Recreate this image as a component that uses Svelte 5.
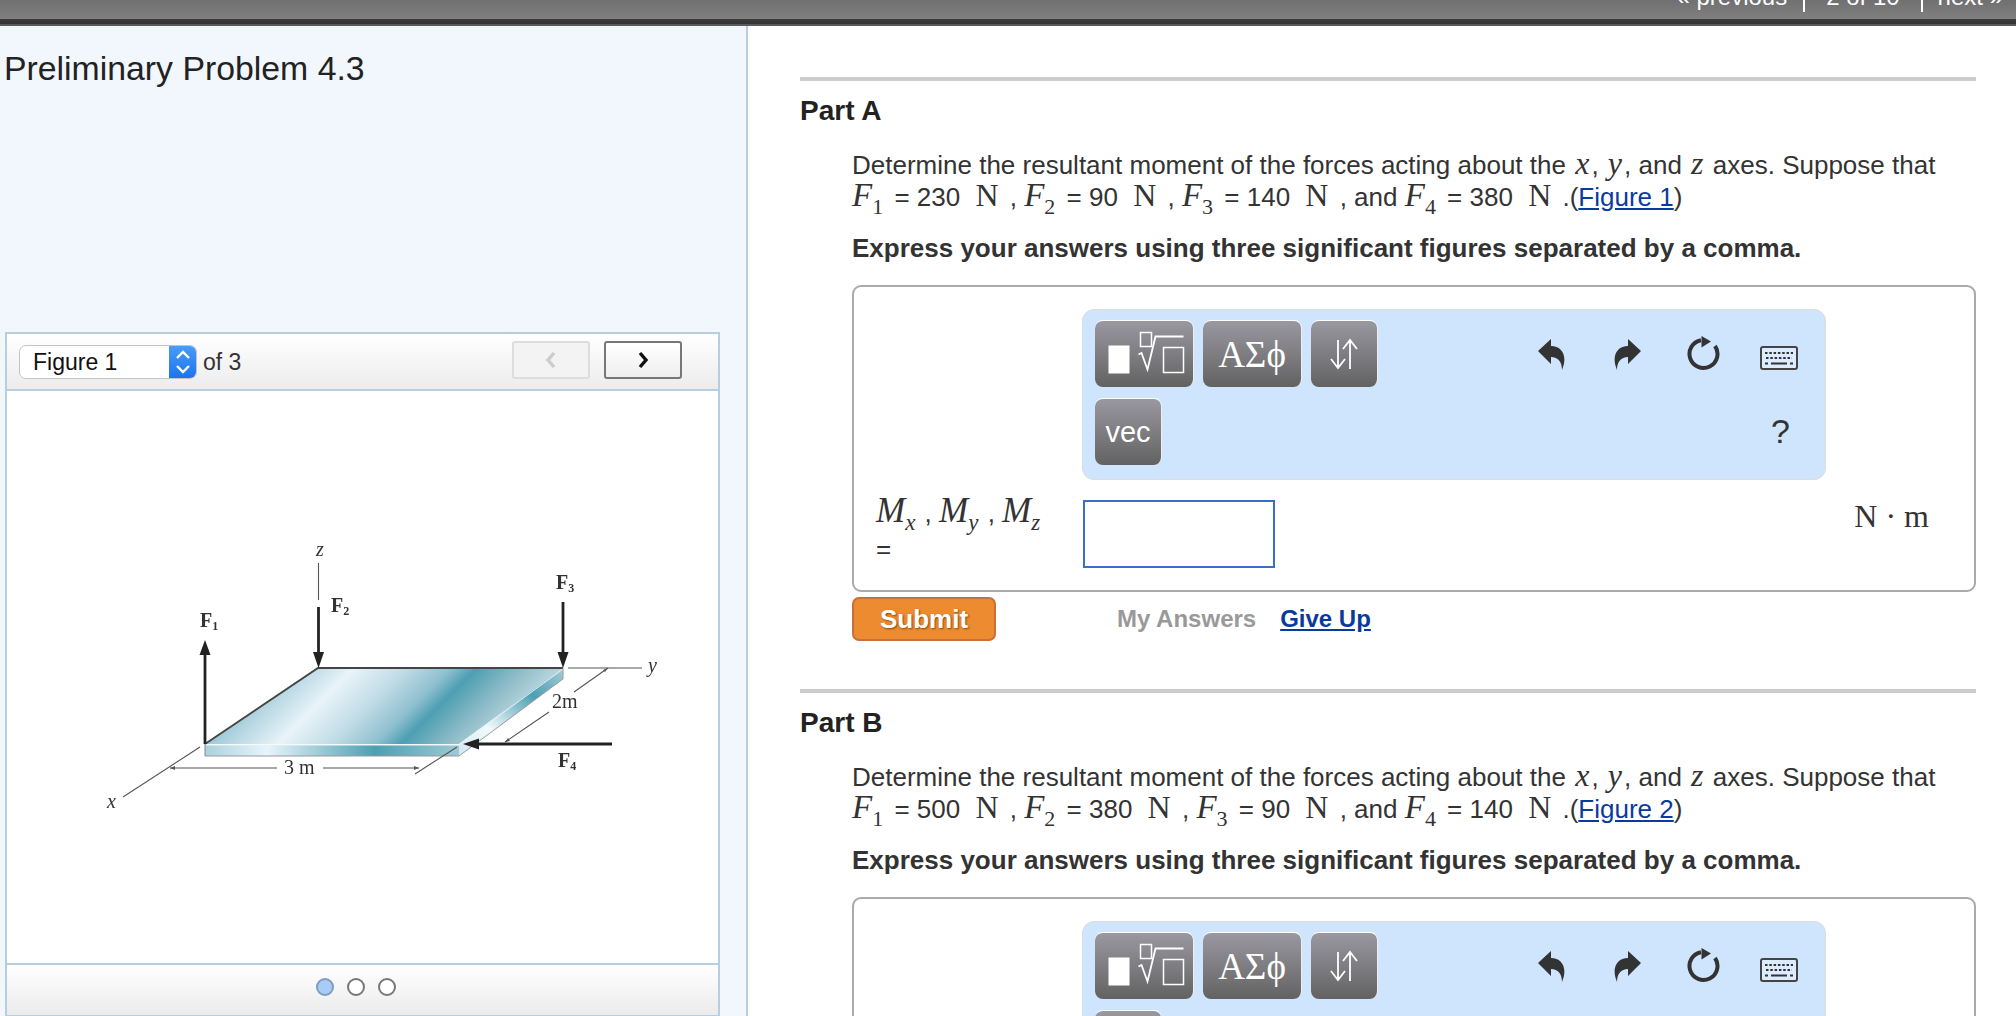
<script>
  const parts = [
    { name: 'Part A', f: [230, 90, 140, 380], fig: 'Figure 1', actions: true },
    { name: 'Part B', f: [500, 380, 90, 140], fig: 'Figure 2', actions: false }
  ];
</script>

<div class="page">
  <header class="bar">
    <nav>
      <span class="prev">« previous</span>
      <span class="count">2 of 10</span>
      <span class="next">next »</span>
    </nav>
  </header>
  <div class="cols">
    <aside>
      <h1>Preliminary Problem 4.3</h1>
      <section class="figure">
        <div class="figbar">
          <div class="select"><span>Figure 1</span><i>
            <svg viewBox="0 0 28 34" width="28" height="34"><path d="M8 13l6-6 6 6M8 21l6 6 6-6" fill="none" stroke="#fff" stroke-width="2.4"/></svg>
          </i></div>
          <span class="of">of 3</span>
          <button class="pg off" aria-label="previous"><svg viewBox="0 0 14 18" width="14" height="18"><path d="M10 2L4 9l6 7" fill="none" stroke="#ccc" stroke-width="3.4"/></svg></button>
          <button class="pg" aria-label="next"><svg viewBox="0 0 14 18" width="14" height="18"><path d="M4 2l6 7-6 7" fill="none" stroke="#111" stroke-width="3.4"/></svg></button>
        </div>
        <div class="figbody">
          <svg class="diagram" viewBox="0 0 600 320" width="600" height="320">
            <defs>
              <linearGradient id="top" gradientUnits="userSpaceOnUse" x1="174.500" y1="174.500" x2="315.500" y2="315.500">
                <stop offset="0" stop-color="#9cc8d6"/><stop offset=".26" stop-color="#e8f4fa"/><stop offset=".45" stop-color="#c0dbe4"/>
                <stop offset=".6" stop-color="#8fc0cf"/><stop offset=".695" stop-color="#4d9fb3"/><stop offset=".86" stop-color="#8fbcc8"/><stop offset="1" stop-color="#b8d6df"/>
              </linearGradient>
              <linearGradient id="front">
                <stop offset="0" stop-color="#a9d2de"/><stop offset=".245" stop-color="#e8f4fa"/><stop offset=".67" stop-color="#4d9fb3"/><stop offset="1" stop-color="#9ccad6"/>
              </linearGradient>
              <linearGradient id="side" x1="0" y1="1" x2="1" y2="0">
                <stop offset="0" stop-color="#cfe8f0"/><stop offset=".3" stop-color="#f2fafd"/><stop offset=".7" stop-color="#4d9fb3"/><stop offset="1" stop-color="#a6cdd8"/>
              </linearGradient>
              <filter id="soft" x="-5%" y="-5%" width="110%" height="110%"><feGaussianBlur stdDeviation="0.6"/></filter>
            </defs>
            <g filter="url(#soft)">
              <path d="M238 148H483L379 224H125Z" fill="url(#top)"/>
              <path d="M125 225H379V236H125Z" fill="url(#front)"/>
              <path d="M379 224L483 148V159L379 236Z" fill="url(#side)"/>
              <path d="M125 225H379L483 149" fill="none" stroke="#e8f3f7" stroke-width="1"/>
              <path d="M125 224L238 148H483" fill="none" stroke="#444" stroke-width="1.8"/>
              <path d="M125 236H379L483 159V148" fill="none" stroke="#9a9a9a" stroke-width="1"/>
              <path d="M125 224V236" stroke="#888" stroke-width="1"/>

              <g fill="none" stroke="#555" stroke-width="1.100">
                <path d="M238.500 43V80"/>
                <path d="M488 148H562"/>
                <path d="M120 227L43 277"/>
                <path d="M90 248H197M243 248H339"/>
                <path d="M377 227L335 254"/>
                <path d="M528 148L494 172M469 192L425 222"/>
              </g>
              <g fill="none" stroke="#222" stroke-width="2.800">
                <path d="M125 132V224"/>
                <path d="M238.500 87V136"/>
                <path d="M483 82V136"/>
                <path d="M395 224H532" stroke-width="3"/>
              </g>
              <g fill="#222">
                <path d="M125 120l-5.500 15h11z"/>
                <path d="M238.500 148l-5.500-16h11z"/>
                <path d="M483 148l-5.500-16h11z"/>
                <path d="M383 224l16-5.500v11z"/>
                <path d="M90 248l5-2v4zM339 248l-5-2v4zM528 148l-5 2 2 2zM425 222l5-1-2-3z" fill="#555"/>
              </g>
              <g class="lab">
                <text x="236" y="36" font-style="italic">z</text>
                <text x="568" y="152" font-style="italic">y</text>
                <text x="27" y="288" font-style="italic">x</text>
                <text x="204" y="254">3 m</text>
                <text x="472" y="188">2m</text>
                <g font-weight="700">
                  <text x="120" y="107">F<tspan class="s" dy="3">1</tspan></text>
                  <text x="251" y="92">F<tspan class="s" dy="3">2</tspan></text>
                  <text x="476" y="69">F<tspan class="s" dy="3">3</tspan></text>
                  <text x="478" y="247">F<tspan class="s" dy="3">4</tspan></text>
                </g>
              </g>
            </g>
          </svg>
        </div>
        <div class="dots"><b class="on"></b><b></b><b></b></div>
      </section>
    </aside>

    <main>
      {#each parts as p}
        <section class="part">
          <h2>{p.name}</h2>
          <div class="q">
            <p class="stmt">Determine the resultant moment of the forces acting about the <em class="v">x</em>, <em class="v">y</em>, and <em class="v">z</em> axes. Suppose that<br />
              <em class="big">F<sub>1</sub></em> = {p.f[0]} <span class="unit">N</span> , <em class="big">F<sub>2</sub></em> = {p.f[1]} <span class="unit">N</span> , <em class="big">F<sub>3</sub></em> = {p.f[2]} <span class="unit">N</span> , and <em class="big">F<sub>4</sub></em> = {p.f[3]} <span class="unit">N</span> .(<a href="#fig">{p.fig}</a>)</p>
            <p class="express">Express your answers using three significant figures separated by a comma.</p>
            <div class="box">
              <div class="tools">
                <div class="row">
                  <button class="tb w1" aria-label="templates">
                    <svg viewBox="0 0 90 60" width="90" height="60">
                      <rect x="9.500" y="21.500" width="21" height="28" fill="#fff"/>
                      <rect x="41.500" y="8.500" width="11" height="14" fill="none" stroke="#fff" stroke-width="1.500"/>
                      <path d="M39.500 30.500l3-1.500 6 16.500 8-33h28" fill="none" stroke="#fff" stroke-width="1.800"/>
                      <rect x="64.500" y="23.500" width="20" height="25" fill="none" stroke="#fff" stroke-width="1.500"/>
                    </svg>
                  </button>
                  <button class="tb w2">ΑΣϕ</button>
                  <button class="tb w3" aria-label="arrows">
                    <svg viewBox="0 0 34 40" width="34" height="40">
                      <path d="M11 6V33M4 25l7 9 7-9M23 35V7M16 15l7-9 7 9" fill="none" stroke="#fff" stroke-width="1.800"/>
                    </svg>
                  </button>
                  <div class="icons">
                    <span><svg viewBox="0 0 27 31" width="27" height="31"><path d="M0 12L13 0V7C24 7 30 17 24 31C24 23 20 18 13 18V25Z" fill="#333"/></svg></span>
                    <span><svg viewBox="0 0 27 31" width="27" height="31"><path d="M27 12L14 0V7C3 7-3 17 3 31C3 23 7 18 14 18V25Z" fill="#333"/></svg></span>
                    <span><svg viewBox="0 0 34 36" width="34" height="36"><path d="M29 10A14 14 0 1 1 15 4.200" fill="none" stroke="#333" stroke-width="4"/><path d="M15.500 0L25 5.500 15.500 11.500Z" fill="#333"/></svg></span>
                    <span class="kbd"><svg viewBox="0 0 38 24" width="38" height="24">
                      <rect x="1" y="1" width="36" height="22" rx="2" fill="#dcebfd" stroke="#444" stroke-width="2"/>
                      <path d="M5 7h28M6 12h26" stroke="#333" stroke-width="2" stroke-dasharray="2.500 1.800"/>
                      <path d="M5 17.500h3M11 17.500h16M30 17.500h3" stroke="#333" stroke-width="2"/>
                    </svg></span>
                  </div>
                </div>
                <div class="row r2">
                  <button class="tb w3 vec">vec</button>
                  <span class="help">?</span>
                </div>
              </div>
              <div class="answer">
                <div class="lbl"><em class="big">M<sub>x</sub></em> , <em class="big">M<sub>y</sub></em> , <em class="big">M<sub>z</sub></em><br /><span class="eq">=</span></div>
                <div class="input"></div>
                <div class="nm">N · m</div>
              </div>
            </div>
            {#if p.actions}
              <div class="actions">
                <button class="submit">Submit</button>
                <span class="mine">My Answers</span>
                <a class="give" href="#give">Give Up</a>
              </div>
            {/if}
          </div>
        </section>
      {/each}
    </main>
  </div>
</div>

<style>
  :global(body) { margin: 0; background: #fff; overflow: hidden; }
  .page { width: 2016px; height: 1016px; overflow: hidden; font-family: "Liberation Sans", Arial, sans-serif; color: #333; }
  .bar { height: 26px; background: linear-gradient(#707070 0, #808080 19px, #3c3c3c 19px, #333 24px, #5a5a5a 24px, #5a5a5a 26px); }
  nav { height: 19px; overflow: hidden; display: flex; justify-content: flex-end; padding-right: 13px; color: #fff; font-size: 24px; line-height: 30px; }
  nav span { display: block; margin-top: -18px; height: 30px; }
  .prev { padding-right: 16px; border-right: 2px solid #fff; }
  .count { padding: 0 21px; border-right: 2px solid #fff; }
  .next { padding-left: 15px; }

  .cols { display: flex; height: 990px; }
  aside { width: 748px; flex: none; box-sizing: border-box; background: #f2f7fe; border-right: 2px solid #b9cde0; padding: 0 26px 0 5px; }
  h1 { margin: 0 0 0 -1px; height: 306px; box-sizing: border-box; padding-top: 22px; font-weight: 400; font-size: 33.8px; line-height: 40px; color: #222; }
  .figure { height: 684px; box-sizing: border-box; border: 2px solid #b9cde0; border-bottom-width: 1px; display: flex; flex-direction: column; background: #fff; }
  .figbar { height: 57px; flex: none; box-sizing: border-box; border-bottom: 2px solid #b9cde0; background: linear-gradient(#fff, #ececec); display: flex; align-items: center; padding: 0 36px 0 12px; }
  .select { width: 178px; height: 34px; box-sizing: border-box; border: 1px solid #c4c4c4; border-radius: 7px; background: #fff; display: flex; justify-content: space-between; overflow: hidden; font-size: 23px; line-height: 33px; color: #111; }
  .select span { padding-left: 13px; }
  .select i { display: block; width: 28px; background: linear-gradient(#4c9cf5, #1a73ee); margin: -1px -1px -1px 0; }
  .of { font-size: 23px; margin-left: 6px; padding-top: 1px; flex: 1; color: #333; }
  .pg { width: 78px; height: 38px; margin: -3px 0 0 14px; box-sizing: border-box; padding: 0; border: 2px solid #777; border-radius: 3px; background: linear-gradient(#fff, #eee); display: flex; align-items: center; justify-content: center; }
  .pg.off { border-color: #ddd; background: #f3f3f3; }
  .figbody { flex: 1; padding: 129px 0 0 73px; min-height: 0; }
  .diagram { display: block; }
  .lab text { font-family: "Liberation Serif", serif; font-size: 20px; fill: #333; }
  .lab .s { font-size: 12px; }
  .dots { height: 52px; flex: none; box-sizing: border-box; border-top: 2px solid #b9cde0; background: linear-gradient(#fff, #ebebeb); display: flex; align-items: center; justify-content: center; gap: 13px; padding: 0 14px 6px 0; }
  .dots b { width: 18px; height: 18px; box-sizing: border-box; border-radius: 50%; border: 2.500px solid #777; background: #fff; }
  .dots b.on { border-color: #7d9cc0; background: #a9cbf8; }

  main { flex: 1; padding: 0 40px 0 52px; min-width: 0; }
  .part { border-top: 4px solid #ccc; margin-top: 51px; }
  .part + .part { margin-top: 48px; }
  h2 { margin: 0; font-size: 28px; line-height: 34px; padding-top: 13px; font-weight: 700; color: #222; }
  .q { padding: 21px 0 0 52px; }
  p { margin: 0; }
  .stmt { font-size: 26px; line-height: 32px; color: #333; }
  em { font-family: "Liberation Serif", serif; font-style: italic; font-size: 28px; }
  .v { font-size: 32px; line-height: 20px; margin: 0 2px; }
  .big { font-size: 33px; line-height: 20px; margin-right: 4px; }
  sub { font-size: 22px; font-style: normal; line-height: 0; }
  .unit { font-family: "Liberation Serif", serif; font-size: 32px; line-height: 20px; margin: 0 4px 0 8px; }
  a { color: #0b3a9e; }
  .express { font-size: 26px; font-weight: 700; line-height: 32px; margin-top: 19px; color: #333; }
  .box { margin-top: 21px; box-sizing: border-box; height: 307px; border: 2px solid #aaa; border-radius: 9px; padding: 22px 0 0 228px; }
  .tools { width: 744px; height: 171px; box-sizing: border-box; background: #cfe4fd; border: 1px solid #dcdcdc; border-radius: 12px; padding: 10px 12px 0; }
  .row { display: flex; align-items: flex-start; gap: 9px; }
  .r2 { margin-top: 11px; justify-content: space-between; }
  .tb { height: 67px; padding: 0; border: 0; border-top: 1px solid #fff; border-right: 1px solid #eee; border-radius: 8px; background: linear-gradient(#9a98a0, #626262); color: #fff; display: flex; align-items: center; justify-content: center; font-family: "Liberation Sans", sans-serif; }
  .w1 { width: 99px; }
  .w2 { width: 99px; font-family: "Liberation Serif", serif; font-size: 37px; }
  .w3 { width: 67px; }
  .vec { font-size: 29px; }
  .icons { margin: 0 -4px 0 auto; display: flex; align-items: center; padding-top: 16px; }
  .icons span { width: 76px; display: flex; justify-content: center; }
  .icons .kbd { margin-top: 8px; }
  .help { font-size: 34px; color: #333; line-height: 40px; padding: 13px 23px 0 0; }
  .answer { display: flex; margin: 20px 0 0 -206px; align-items: flex-start; }
  .lbl { width: 207px; flex: none; font-size: 26px; line-height: 36px; margin-top: -5px; box-sizing: border-box; }
  .lbl sub { font-style: italic; font-size: 23px; }
  .lbl .big { font-size: 35px; margin-right: 2px; }
  .eq { font-size: 26px; }
  .input { width: 192px; height: 68px; box-sizing: border-box; border: 2px solid #3a6fc9; background: #fff; }
  .nm { margin: -2px 0 0 auto; padding-right: 45px; font-family: "Liberation Serif", serif; font-size: 32px; line-height: 36px; }
  .actions { display: flex; align-items: center; margin-top: 5px; font-size: 24px; font-weight: 700; }
  .submit { width: 144px; height: 44px; box-sizing: border-box; background: #ec8b2f; border: 2px solid #c9703a; border-radius: 7px; color: #fff; font: 700 26px "Liberation Sans", sans-serif; text-shadow: 1px 1px 2px #8a4a10; padding: 0; }
  .mine { color: #999; margin-left: 121px; }
  .give { margin-left: 24px; color: #0b3a9e; }
</style>
